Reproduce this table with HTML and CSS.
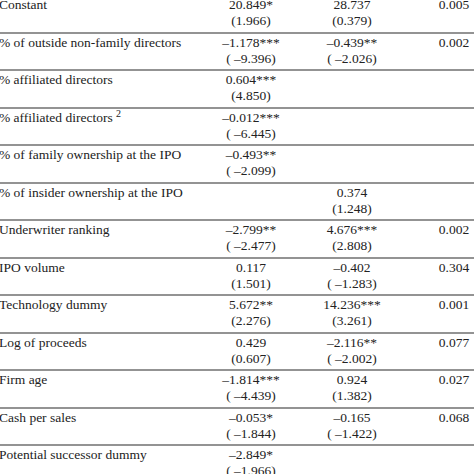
FILE: index.html
```html
<!DOCTYPE html>
<html>
<head>
<meta charset="utf-8">
<link rel="stylesheet" href="styles.css">
</head>
<body>
<div class="table">
  <div class="row">
    <div class="label">Constant</div>
    <div class="cell">20.849*<br>(1.966)</div>
    <div class="cell">28.737<br>(0.379)</div>
    <div class="cell">0.005</div>
  </div>
  <div class="row">
    <div class="label">% of outside non-family directors</div>
    <div class="cell">–1.178***<br>( –9.396)</div>
    <div class="cell">–0.439**<br>( –2.026)</div>
    <div class="cell">0.002</div>
  </div>
  <div class="row">
    <div class="label">% affiliated directors</div>
    <div class="cell">0.604***<br>(4.850)</div>
    <div class="cell"></div>
    <div class="cell"></div>
  </div>
  <div class="row">
    <div class="label">% affiliated directors <sup>2</sup></div>
    <div class="cell">–0.012***<br>( –6.445)</div>
    <div class="cell"></div>
    <div class="cell"></div>
  </div>
  <div class="row">
    <div class="label">% of family ownership at the IPO</div>
    <div class="cell">–0.493**<br>( –2.099)</div>
    <div class="cell"></div>
    <div class="cell"></div>
  </div>
  <div class="row">
    <div class="label">% of insider ownership at the IPO</div>
    <div class="cell"></div>
    <div class="cell">0.374<br>(1.248)</div>
    <div class="cell"></div>
  </div>
  <div class="row">
    <div class="label">Underwriter ranking</div>
    <div class="cell">–2.799**<br>( –2.477)</div>
    <div class="cell">4.676***<br>(2.808)</div>
    <div class="cell">0.002</div>
  </div>
  <div class="row">
    <div class="label">IPO volume</div>
    <div class="cell">0.117<br>(1.501)</div>
    <div class="cell">–0.402<br>( –1.283)</div>
    <div class="cell">0.304</div>
  </div>
  <div class="row">
    <div class="label">Technology dummy</div>
    <div class="cell">5.672**<br>(2.276)</div>
    <div class="cell">14.236***<br>(3.261)</div>
    <div class="cell">0.001</div>
  </div>
  <div class="row">
    <div class="label">Log of proceeds</div>
    <div class="cell">0.429<br>(0.607)</div>
    <div class="cell">–2.116**<br>( –2.002)</div>
    <div class="cell">0.077</div>
  </div>
  <div class="row">
    <div class="label">Firm age</div>
    <div class="cell">–1.814***<br>( –4.439)</div>
    <div class="cell">0.924<br>(1.382)</div>
    <div class="cell">0.027</div>
  </div>
  <div class="row">
    <div class="label">Cash per sales</div>
    <div class="cell">–0.053*<br>( –1.844)</div>
    <div class="cell">–0.165<br>( –1.422)</div>
    <div class="cell">0.068</div>
  </div>
  <div class="row">
    <div class="label">Potential successor dummy</div>
    <div class="cell">–2.849*<br>( –1.966)</div>
    <div class="cell"></div>
    <div class="cell"></div>
  </div>
</div>
</body>
</html>
```

FILE: styles.css
```css
html, body {
  margin: 0;
  padding: 0;
  background: #fff;
  overflow: hidden;
}
body {
  width: 474px;
  height: 474px;
}
.table {
  margin-top: -6px;
  margin-left: -1px;
  width: 520px;
  font-family: "Liberation Serif", "Times New Roman", serif;
  font-size: 13.5px;
  line-height: 16px;
  color: #222;
}
.row {
  display: grid;
  grid-template-columns: 200px 104px 98px 106px;
  height: 37.5px;
  box-sizing: border-box;
  border-top: 2px solid #939393;
  padding-top: 1px;
}
.label {
  white-space: nowrap;
}
.cell {
  text-align: center;
  white-space: nowrap;
}
sup {
  font-size: 10px;
  line-height: 0;
  vertical-align: 5px;
}
```
